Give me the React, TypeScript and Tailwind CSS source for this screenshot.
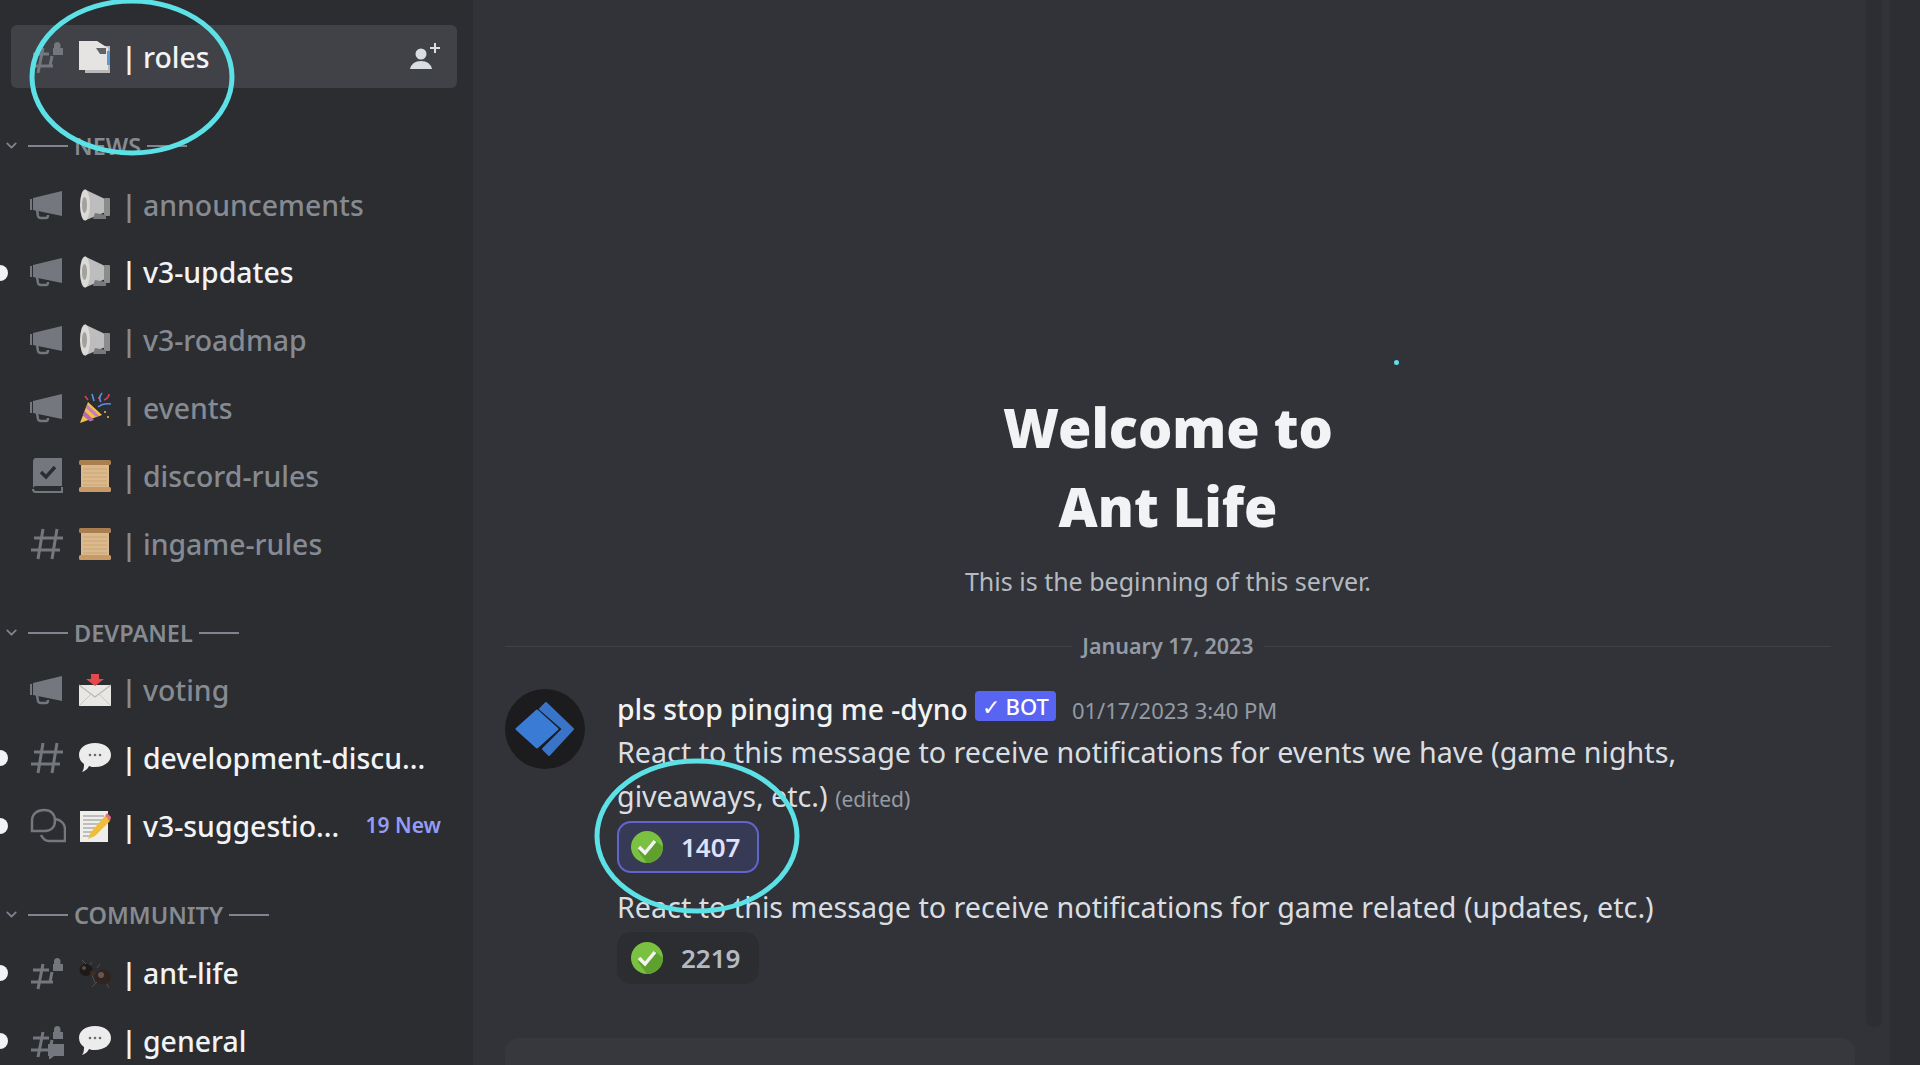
import { ChevronDown } from 'lucide-react';

const FONT = '"Noto Sans", "Open Sans", sans-serif';

function Cone({ className = '' }: { className?: string }) {
  return (
    <svg viewBox="0 0 32 32" className={className}>
      <path d="M6 0.500 L24 9 Q27 10 27 13 V20 Q27 23 24 24 L6 31.500Z" fill="#bdbdbd" />
      <ellipse cx="6" cy="16" rx="5" ry="15.500" fill="#dcdad6" />
      <ellipse cx="5.500" cy="16" rx="2.500" ry="8" fill="#a3a19d" />
      <rect x="25" y="9" width="6" height="18" rx="1" fill="#8c8c8c" />
      <path d="M16 24 L14 30 H27 V26" fill="#77797d" />
    </svg>
  );
}

function Doc({ className = '' }: { className?: string }) {
  return (
    <svg viewBox="0 0 32 32" className={className}>
      <rect x="6" y="5" width="25" height="27" fill="#b9b9b9" />
      <path d="M0 0 H18 L29 7 V29 H0Z" fill="#e6e4e2" />
      <path d="M17 7 H27 V13 H21Z" fill="#5f6368" />
      <rect x="28" y="10" width="3" height="14" fill="#5b9bd5" />
    </svg>
  );
}

function Party({ className = '' }: { className?: string }) {
  return (
    <svg viewBox="0 0 32 32" className={className}>
      <path d="M1 31 L9 10 L23 23Z" fill="#f4c04a" />
      <path d="M5.500 19 L15 28 L11 29.500 L3.800 23.500Z" fill="#b76ab0" />
      <path d="M8.300 12.500 L20 23.500 L17 25 L7 16Z" fill="#c97cc0" />
      <path d="M13 2 L15 9 M23 1 Q19 6 22 10 M32 12 Q24 11 19 15" stroke="#5b8fe8" strokeWidth="1.600" fill="none" />
      <path d="M6 4 L9 8 M30 2 Q30 6 25 8" stroke="#d8405a" strokeWidth="1.600" fill="none" />
      <circle cx="26" cy="20" r="1" fill="#f4c04a" />
      <circle cx="29" cy="25" r="1" fill="#f4c04a" />
      <circle cx="20" cy="6" r="1" fill="#e25c7a" />
    </svg>
  );
}

function Scroll({ className = '' }: { className?: string }) {
  return (
    <svg viewBox="0 0 32 32" className={className}>
      <rect x="2" y="3" width="28" height="26" fill="#dcb98c" />
      <rect x="0" y="0" width="32" height="5" rx="1.500" fill="#a97f52" />
      <rect x="0" y="27" width="32" height="5" rx="1.500" fill="#c79a68" />
      <path d="M4 9 H28 M4 13 H28 M4 17 H28 M4 21 H28 M4 25 H28" stroke="#cba679" strokeWidth="1" />
    </svg>
  );
}

function Mail({ className = '' }: { className?: string }) {
  return (
    <svg viewBox="0 0 32 32" className={className}>
      <rect x="0" y="11" width="32" height="21" fill="#e9e7e4" />
      <path d="M0 11 L16 23 L32 11" stroke="#b9b7b4" strokeWidth="1.200" fill="none" />
      <path d="M0 32 L12 20 M32 32 L20 20" stroke="#c9c7c4" strokeWidth="1" />
      <path d="M12 0 H20 V5 H25 L16 12 L7 5 H12Z" fill="#e5484d" />
    </svg>
  );
}

function Bubble({ className = '' }: { className?: string }) {
  return (
    <svg viewBox="0 0 32 32" className={className}>
      <path d="M16 1 C26 1 32 6 32 13 C32 20 25 25 16 25 C14 25 12 25 10 24 C9 27 6 29 3 30 C5 27 5 25 5 22 C2 20 0 17 0 13 C0 6 6 1 16 1Z" fill="#ececec" />
      <circle cx="11" cy="13" r="1.300" fill="#6b6b6b" />
      <circle cx="16" cy="13" r="1.300" fill="#6b6b6b" />
      <circle cx="21" cy="13" r="1.300" fill="#6b6b6b" />
    </svg>
  );
}

function Memo({ className = '' }: { className?: string }) {
  return (
    <svg viewBox="0 0 32 32" className={className}>
      <rect x="1" y="1" width="28" height="31" fill="#eeeeea" />
      <path d="M4 6 H25 M4 10 H25 M4 14 H20 M4 18 H16 M4 22 H13 M4 26 H11" stroke="#8d8d90" strokeWidth="1" />
      <path d="M9 29 L12 22 L26 6 L31 11 L16 26Z" fill="#f0bd3a" />
      <path d="M26 6 L28 3 L32 7 L31 11Z" fill="#e8707a" />
    </svg>
  );
}

function Ant({ className = '' }: { className?: string }) {
  return (
    <svg viewBox="0 0 32 32" className={className}>
      <path d="M3 3 L8 8 M13 5 L10 9 M13 18 L16 26 M18 11 L21 7 M27 26 L30 31 M19 24 L13 30" stroke="#5a4c46" strokeWidth="1" fill="none" />
      <ellipse cx="7" cy="13" rx="6.500" ry="6" fill="#1f1a18" />
      <circle cx="5" cy="11" r="2" fill="#5a4c46" />
      <ellipse cx="14" cy="16" rx="3" ry="2.500" fill="#3a2e29" />
      <ellipse cx="24" cy="20" rx="8" ry="7.500" fill="#2f2421" />
      <circle cx="22" cy="18" r="3" fill="#6a564e" />
    </svg>
  );
}

function Speaker() {
  return (
    <svg viewBox="0 0 32 30" className="w-[32px] h-[30px]">
      <rect x="0" y="9" width="2" height="11" fill="#74777e" />
      <path d="M3 8 L32 1 V26 L3 20Z" fill="#74777e" />
      <path d="M7 20 L8 26 Q8.500 28 11 28 H16 Q18 28 18 25" stroke="#74777e" strokeWidth="2.500" fill="none" />
    </svg>
  );
}

function HashIcon() {
  return (
    <svg viewBox="0 0 34 34" className="w-[34px] h-[34px]" fill="none" stroke="#74777e" strokeWidth="3">
      <path d="M13 2 L8 32 M27 2 L22 32 M4 11 H33 M1 23 H30" />
    </svg>
  );
}

function HashLock({ bubble }: { bubble?: boolean }) {
  // hash with the corner cut away for the lock (and thread bubble on general)
  return (
    <svg viewBox="0 0 36 36" className="w-[36px] h-[36px]">
      <g stroke="#74777e" strokeWidth="3" fill="none">
        <path d="M13 9 L8 34 M22 17 L20 27 M3 15 H19 M1 27 H23" />
      </g>
      <path d="M27 3 a3.500 3.500 0 0 1 3.500 3.500 V9 H33 V16 H23 V9 H24 V6.500 A3.500 3.500 0 0 1 27 3Z" fill="#74777e" />
      {bubble && <path d="M18 21 H34 V33 H24 L19 37 V33 H18Z" fill="#74777e" />}
    </svg>
  );
}

function Forum() {
  return (
    <svg viewBox="0 0 36 36" className="w-[36px] h-[36px]" fill="none" stroke="#74777e" strokeWidth="2.500">
      <path d="M14 2 C7 2 2 6 2 13 C2 17 2 21 2 23 H14 C21 23 25 19 25 13 C25 6 21 2 14 2Z" />
      <path d="M26 11 C31 12 35 16 35 21 V33 H19 C15 33 13 31 11 27" />
    </svg>
  );
}

function Rules() {
  return (
    <svg viewBox="0 0 32 36" className="w-[32px] h-[36px] ml-[2px]">
      <path d="M4 0 H30 V28 H4 Q1 28 1 31 V4 Q1 0 4 0Z" fill="#74777e" />
      <path d="M1 31 Q1 34 4 34 H30 V29" stroke="#74777e" strokeWidth="2" fill="none" />
      <path d="M9 14 L14 19 L23 9" stroke="#2b2d31" strokeWidth="3.500" fill="none" />
    </svg>
  );
}

function CheckEmoji() {
  return (
    <svg viewBox="0 0 32 32" className="w-[32px] h-[32px] shrink-0">
      <circle cx="16" cy="16" r="16" fill="#7ac142" />
      <path d="M16 32 A16 16 0 0 0 32 16 L24 9 L13 23 L8 18 L7 20Z" fill="#5fa02f" />
      <path d="M8 16 L14 22 L24 10" stroke="#f4f4f4" strokeWidth="3.500" fill="none" />
    </svg>
  );
}

function Channel({ icon, emoji, name, active, unread, selected, badge, right }: {
  icon: React.ReactNode;
  emoji: React.ReactNode;
  name: string;
  active?: boolean;
  unread?: boolean;
  selected?: boolean;
  badge?: string;
  right?: React.ReactNode;
}) {
  return (
    <div className="relative h-[67.8px] flex items-center">
      {unread && <div className="absolute -left-[8px] top-[26px] w-[16px] h-[16px] rounded-full bg-[#f2f3f5]" />}
      <div className={`w-[446px] ml-[11px] h-[63px] flex items-center pl-[19px] pr-[16px] rounded-[6px] ${selected ? 'bg-[#404248]' : ''}`}>
        <div className="w-[36px] h-[36px] flex items-center shrink-0">{icon}</div>
        <div className="w-[32px] h-[32px] ml-[13px] shrink-0">{emoji}</div>
        <div className={`flex items-center text-[28.400px] leading-[38px] font-medium whitespace-nowrap ${active ? 'text-[#f2f3f5]' : 'text-[#868a91]'}`}>
          <span className="w-[12px] ml-[10px] text-center text-[29px] font-semibold">|</span>
          <span className="ml-[10px]">{name}</span>
        </div>
        {badge && <div className="ml-auto text-[21px] font-semibold text-[#949cf7] whitespace-nowrap">{badge}</div>}
        {right && <div className="ml-auto">{right}</div>}
      </div>
    </div>
  );
}

function Category({ name, className }: { name: string; className: string }) {
  return (
    <div className={`flex items-center h-[30px] ${className}`}>
      <ChevronDown className="w-[17px] h-[17px] ml-[3px] text-[#80848e]" strokeWidth={2.500} />
      <div className="w-[40px] h-[2px] bg-[#80848e] ml-[8px]" />
      <div className="text-[23.500px] font-semibold text-[#868a91] mx-[6px] leading-[30px]">{name}</div>
      <div className="w-[40px] h-[2px] bg-[#80848e]" />
    </div>
  );
}

const speaker = <Speaker />;
const hash = <HashIcon />;
const emojiSize = 'w-[32px] h-[32px]';

export default function App() {
  return (
    <div className="relative flex h-[1065px] w-[1920px] overflow-hidden bg-[#313338]" style={{ fontFamily: FONT }}>
      {/* Channel list */}
      <div className="w-[473px] shrink-0 bg-[#2b2d31] overflow-hidden pt-[23px]">
        <Channel
          selected
          active
          icon={<HashLock />}
          emoji={<Doc className={emojiSize} />}
          name="roles"
          right={
            <svg viewBox="0 0 32 28" className="w-[32px] h-[28px]">
              <circle cx="12" cy="11" r="5.500" fill="#dbdee1" />
              <path d="M1 26 Q3 18 12 18 Q21 18 23 26Z" fill="#dbdee1" />
              <path d="M26 0 V10 M21 5 H31" stroke="#dbdee1" strokeWidth="2" />
            </svg>
          }
        />
        <Category name="NEWS" className="mt-[40px]" />
        <div className="mt-[10px]">
          <Channel icon={speaker} emoji={<Cone className={emojiSize} />} name="announcements" />
          <Channel icon={speaker} emoji={<Cone className={emojiSize} />} name="v3-updates" active unread />
          <Channel icon={speaker} emoji={<Cone className={emojiSize} />} name="v3-roadmap" />
          <Channel icon={speaker} emoji={<Party className={emojiSize} />} name="events" />
          <Channel icon={<Rules />} emoji={<Scroll className={emojiSize} />} name="discord-rules" />
          <Channel icon={hash} emoji={<Scroll className={emojiSize} />} name="ingame-rules" />
        </div>
        <Category name="DEVPANEL" className="mt-[40px]" />
        <div className="mt-[9px]">
          <Channel icon={speaker} emoji={<Mail className={emojiSize} />} name="voting" />
          <Channel icon={hash} emoji={<Bubble className={emojiSize} />} name="development-discu..." active unread />
          <Channel icon={<Forum />} emoji={<Memo className={emojiSize} />} name="v3-suggestio..." active unread badge="19 New" />
        </div>
        <Category name="COMMUNITY" className="mt-[40px]" />
        <div className="mt-[9px]">
          <Channel icon={<HashLock />} emoji={<Ant className={emojiSize} />} name="ant-life" active unread />
          <Channel icon={<HashLock bubble />} emoji={<Bubble className={emojiSize} />} name="general" active unread />
        </div>
      </div>

      {/* Chat */}
      <div className="relative flex-1 min-w-0 pl-[32px] pt-[388px]">
        <div className="w-[1326px] flex flex-col items-center">
          <h1 className="text-[54px] leading-[79px] font-black text-[#f2f3f5] text-center">Welcome to<br />Ant Life</h1>
          <p className="text-[25px] leading-[36px] text-[#b5bac1] mt-[17px]">This is the beginning of this server.</p>
        </div>

        <div className="w-[1326px] flex items-center mt-[32px] h-[30px]">
          <div className="flex-1 h-[1px] bg-[#3f4147]" />
          <div className="text-[21.500px] font-semibold text-[#949ba4] px-[10px]">January 17, 2023</div>
          <div className="flex-1 h-[1px] bg-[#3f4147]" />
        </div>

        <div className="flex mt-[28px]">
          <div className="w-[80px] h-[80px] rounded-full bg-[#1c1c1e] flex items-center justify-center shrink-0">
            <svg viewBox="0 0 64 64" className="w-[64px] h-[64px]">
              <path d="M4 32 L24 14 L44 32 L24 50Z" fill="#3a7bd5" strokeLinejoin="round" stroke="#3a7bd5" strokeWidth="3" />
              <path d="M33 6 L60 32 L36 58 L30 52 L50 32 L27 12Z" fill="#3a74c8" strokeLinejoin="round" stroke="#3a74c8" strokeWidth="2" />
            </svg>
          </div>
          <div className="ml-[32px] w-[1180px]">
            <div className="flex items-center h-[40px]">
              <span className="text-[28.300px] font-medium text-[#f2f3f5]">pls stop pinging me -dyno</span>
              <span className="ml-[7px] h-[30px] px-[7px] rounded-[4px] bg-[#5865f2] text-white text-[22px] leading-[30px] font-medium mb-[6px]">✓ BOT</span>
              <span className="ml-[16px] text-[22px] text-[#949ba4] mt-[2px]">01/17/2023 3:40 PM</span>
            </div>
            <div className="text-[28.700px] leading-[44px] text-[#dbdee1] mt-[1px]">
              React to this message to receive notifications for events we have (game nights, giveaways, etc.) <span className="text-[21px] text-[#949ba4]">(edited)</span>
            </div>
            <div className="flex items-center w-[142px] h-[52px] rounded-[14px] bg-[#373a54] border-2 border-[#5f66d0] pl-[12px]">
              <CheckEmoji />
              <span className="ml-[18px] text-[26px] font-semibold text-[#dee0fc]">1407</span>
            </div>
            <div className="text-[28.700px] leading-[44px] text-[#dbdee1] mt-[12px]">
              React to this message to receive notifications for game related (updates, etc.)
            </div>
            <div className="flex items-center w-[142px] h-[52px] mt-[3px] rounded-[14px] bg-[#2b2d31] pl-[14px]">
              <CheckEmoji />
              <span className="ml-[18px] text-[26px] font-semibold text-[#b5bac1]">2219</span>
            </div>
          </div>
        </div>

        <div className="w-[1350px] h-[60px] mt-[54px] rounded-[14px] bg-[#36383d]" />

        {/* scrollbar */}
        <div className="absolute top-0 bottom-[38px] left-[1393px] w-[16px] rounded-b-full bg-[#2c2e33]" />
        <div className="absolute top-0 bottom-0 right-0 w-[30px] bg-[#2c2e33]" />
        {/* stray speck from the annotation pen */}
        <div className="absolute left-[921px] top-[360px] w-[5px] h-[5px] rounded-full bg-[#5ce1e6]" />
      </div>

      {/* annotation rings drawn over the screenshot */}
      <svg className="absolute left-0 top-0 pointer-events-none" width="1920" height="1065" fill="none" stroke="#5ce1e6" strokeWidth="5">
        <ellipse cx="132" cy="77" rx="100" ry="76" />
        <ellipse cx="697" cy="836" rx="100" ry="75" />
      </svg>
    </div>
  );
}
